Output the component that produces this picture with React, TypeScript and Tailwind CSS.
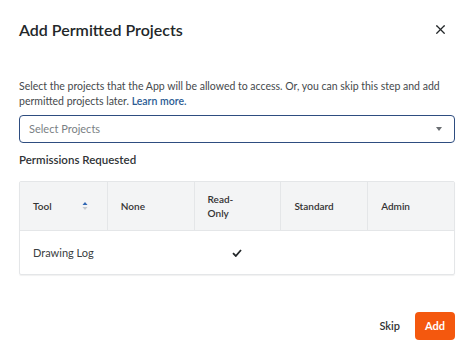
import { X } from "lucide-react";

function HeaderCell({ children, className }: { children: React.ReactNode; className?: string }) {
  return (
    <div
      className={`flex items-center px-[13px] text-[10px] font-semibold leading-[14px] text-[#333] border-l border-[#e4e6e8] first:border-l-0 ${className ?? ""}`}
    >
      {children}
    </div>
  );
}

function SortIcon() {
  return (
    <svg width="6" height="10" viewBox="0 0 6 10" className="ml-auto">
      <path d="M3 1 L5.5 4 L0.5 4 Z" fill="#2f66b3" />
      <path d="M3 9 L5.5 6 L0.5 6 Z" fill="#c4c8cc" />
    </svg>
  );
}

export default function App() {
  return (
    <div
      className="w-[474px] h-[355px] bg-white text-[#232729] flex flex-col"
      style={{ fontFamily: "Lato, 'Noto Sans', sans-serif" }}
    >
      <div className="flex items-center justify-between pl-[19px] pr-[26px] pt-[17px] h-[42px]">
        <h1 className="text-[16px] font-semibold text-[#232729]">Add Permitted Projects</h1>
        <X className="w-[15px] h-[15px] text-[#232729]" strokeWidth={2} />
      </div>

      <div className="px-[19px] mt-[37px]">
        <p className="text-[10.5px] leading-[15px] text-[#45494c] whitespace-nowrap">
          Select the projects that the App will be allowed to access. Or, you can skip this step and add
          <br />
          permitted projects later. <span className="text-[#2b5c93] font-semibold">Learn more.</span>
        </p>

        <div className="mt-[6px] h-[28px] w-[436px] border border-[#2e4d80] rounded-[4px] flex items-center pl-[9px] pr-[12px]">
          <span className="text-[11px] text-[#7a7f84]">Select Projects</span>
          <svg width="6" height="4" viewBox="0 0 6 4" className="ml-auto">
            <path d="M0 0 L6 0 L3 4 Z" fill="#6a6e72" />
          </svg>
        </div>

        <h2 className="mt-[8px] text-[11.5px] font-semibold text-[#2f3336]">Permissions Requested</h2>

        <div className="mt-[13px] w-[436px] border border-[#e4e6e8] rounded-[2px] shadow-[0_1px_1px_rgba(0,0,0,0.06)]">
          <div className="grid grid-cols-5 h-[49px] bg-[#f3f4f5] border-b border-[#e4e6e8]">
            <HeaderCell>
              <span>Tool</span>
              <SortIcon />
              <span className="w-[6px]" />
            </HeaderCell>
            <HeaderCell className="font-normal">None</HeaderCell>
            <HeaderCell className="font-normal">
              Read-
              <br />
              Only
            </HeaderCell>
            <HeaderCell className="font-normal">Standard</HeaderCell>
            <HeaderCell className="font-normal">Admin</HeaderCell>
          </div>
          <div className="grid grid-cols-5 h-[43px] items-center">
            <div className="pl-[13px] text-[11px] text-[#3a3e41]">Drawing Log</div>
            <div />
            <div className="flex justify-center">
              <svg width="10" height="8" viewBox="0 0 10 8">
                <path d="M1 4.2 L3.8 7 L9 1" stroke="#232729" strokeWidth="1.8" fill="none" />
              </svg>
            </div>
            <div />
            <div />
          </div>
        </div>
      </div>

      <div className="mt-auto mb-[15px] flex items-center justify-end gap-[15px] pr-[19px]">
        <button className="text-[11px] font-semibold text-[#333]">Skip</button>
        <button className="h-[28px] px-[10px] rounded-[4px] bg-[#f4580e] text-white text-[11px] font-bold">
          Add
        </button>
      </div>
    </div>
  );
}
